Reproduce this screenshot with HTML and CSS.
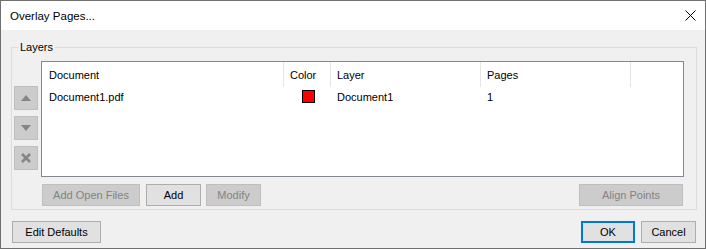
FILE: index.html
```html
<!DOCTYPE html>
<html>
<head>
<meta charset="utf-8">
<link rel="stylesheet" href="styles.css">
</head>
<body>
<div class="window">
  <div class="titlebar">
    <span class="title">Overlay Pages...</span>
    <svg class="close" width="11" height="11" viewBox="0 0 11 11"><path d="M0.5 0.5 L10.5 10.5 M10.5 0.5 L0.5 10.5" stroke="#000" stroke-width="1" fill="none"/></svg>
  </div>
  <div class="body">
    <fieldset class="group">
      <legend>Layers</legend>
      <div class="group-main">
        <div class="side-buttons">
          <button class="btn side disabled"><svg width="10" height="6" viewBox="0 0 10 6"><path d="M5 0 L10 6 L0 6 Z" fill="#858585"/></svg></button>
          <button class="btn side disabled"><svg width="10" height="6" viewBox="0 0 10 6"><path d="M0 0 L10 0 L5 6 Z" fill="#858585"/></svg></button>
          <button class="btn side disabled"><svg width="10" height="10" viewBox="0 0 10 10"><path d="M1 1 L9 9 M9 1 L1 9" stroke="#858585" stroke-width="2.6" fill="none"/></svg></button>
        </div>
        <div class="listview">
          <div class="lv-header">
            <div class="col c-doc">Document</div>
            <div class="col c-color">Color</div>
            <div class="col c-layer">Layer</div>
            <div class="col c-pages">Pages</div>
            <div class="col c-rest"></div>
          </div>
          <div class="lv-row">
            <div class="cell c-doc">Document1.pdf</div>
            <div class="cell c-color"><span class="swatch"></span></div>
            <div class="cell c-layer">Document1</div>
            <div class="cell c-pages">1</div>
          </div>
        </div>
      </div>
      <div class="group-buttons">
        <button class="btn disabled w-open">Add Open Files</button>
        <button class="btn w-add">Add</button>
        <button class="btn disabled w-modify">Modify</button>
        <span class="spacer"></span>
        <button class="btn disabled w-align">Align Points</button>
      </div>
    </fieldset>
    <div class="footer">
      <button class="btn w-edit">Edit Defaults</button>
      <span class="spacer"></span>
      <button class="btn default w-ok">OK</button>
      <button class="btn w-cancel">Cancel</button>
    </div>
  </div>
</div>
</body>
</html>
```
FILE: styles.css
```css
* { box-sizing: border-box; }
html, body { margin: 0; padding: 0; background: #f0f0f0; }
body {
  font-family: "Liberation Sans", Arial, sans-serif;
  font-size: 11px;
  color: #000;
}
.window {
  width: 706px;
  height: 249px;
  border: 1px solid #6f6f6f;
  background: #f0f0f0;
  display: flex;
  flex-direction: column;
}
.titlebar {
  height: 29px;
  background: #fff;
  display: flex;
  align-items: center;
  justify-content: space-between;
  padding-left: 9px;
  padding-right: 9px;
}
.title { font-size: 11.5px; }
.close { display: block; }
.body {
  padding: 10px 8px 0 10px;
  display: flex;
  flex-direction: column;
}
.group {
  margin: 0;
  border: 1px solid #dcdcdc;
  padding: 6px 12px 3px 2px;
  min-width: 0;
}
.group legend {
  margin-left: 4px;
  padding: 0 2px;
  line-height: 15px;
  font-size: 11px;
}
.group-main {
  display: flex;
  gap: 3px;
}
.side-buttons {
  width: 24px;
  display: flex;
  flex-direction: column;
  gap: 6px;
  padding-top: 25px;
}
.btn {
  font-family: inherit;
  font-size: 11px;
  height: 22px;
  padding: 0;
  margin: 0;
  background: #e1e1e1;
  border: 1px solid #adadad;
  color: #000;
  display: flex;
  align-items: center;
  justify-content: center;
}
.btn.disabled {
  background: #cccccc;
  border-color: #bfbfbf;
  color: #838383;
}
.btn.side {
  width: 24px;
  height: 24px;
}
.btn.default {
  border: 2px solid #0078d7;
}
.listview {
  flex: 1;
  height: 116px;
  border: 1px solid #828790;
  background: #fff;
}
.lv-header {
  display: flex;
  height: 25px;
}
.lv-header .col {
  border-right: 1px solid #e5e5e5;
  padding-left: 6px;
  display: flex;
  align-items: center;
}
.lv-header .col.c-rest { border-right: none; flex: 1; }
.c-doc { width: 242px; }
.lv-header .c-doc { padding-left: 7px; }
.c-color { width: 47px; }
.c-layer { width: 150px; }
.c-pages { width: 150px; }
.lv-row {
  display: flex;
  height: 19px;
  align-items: center;
}
.lv-row .cell {
  padding-left: 6px;
  display: flex;
  align-items: center;
}
.lv-row .c-doc { padding-left: 7px; }
.lv-row .cell.c-color {
  justify-content: center;
  padding-left: 0;
}
.swatch {
  display: block;
  width: 13px;
  height: 13px;
  background: #ff0000;
  border: 1px solid #000;
  margin-left: 1px;
}
.group-buttons {
  display: flex;
  margin-top: 7px;
  padding-left: 28px;
}
.spacer { flex: 1; }
.w-open { width: 98px; }
.w-add { width: 55px; margin-left: 6px; }
.w-modify { width: 55px; margin-left: 5px; }
.w-align { width: 104px; margin-right: 1px; }
.footer {
  display: flex;
  margin-top: 11px;
  padding-left: 1px;
  padding-right: 1px;
}
.w-edit { width: 89px; }
.w-ok { width: 54px; }
.w-cancel { width: 55px; margin-left: 6px; }
```
